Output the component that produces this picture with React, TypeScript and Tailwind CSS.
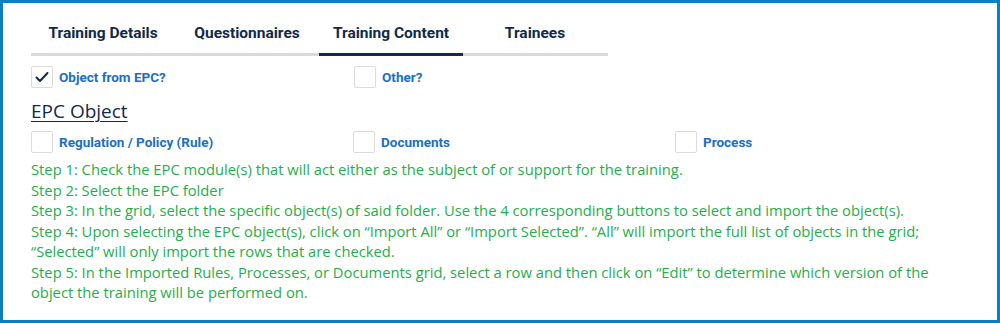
import React from "react";

const tabs = ["Training Details", "Questionnaires", "Training Content", "Trainees"];

function Box({ checked }: { checked?: boolean }) {
  return (
    <span className="flex h-[22px] w-[22px] shrink-0 items-center justify-center rounded-[2px] border border-[#dcdcdc] bg-white">
      {checked && (
        <svg width="16" height="16" viewBox="0 0 16 16" fill="none">
          <path d="M2.5 8.5 L6 12 L13.5 4" stroke="#0f2a4a" strokeWidth="2" strokeLinecap="round" strokeLinejoin="round" />
        </svg>
      )}
    </span>
  );
}

function Check({ label, checked }: { label: string; checked?: boolean }) {
  return (
    <div className="flex w-[323px] items-center gap-[6px]">
      <Box checked={checked} />
      <span className="text-[13.5px] font-bold text-[#1a6fc4]" style={{ fontFamily: "Roboto, sans-serif" }}>
        {label}
      </span>
    </div>
  );
}

export default function App() {
  return (
    <div className="h-[323px] w-[1000px] border-[3px] border-[#0b7fc4] bg-white">
      <div className="pl-[28px] pt-[17px]">
        <div className="flex w-[577px] border-b-[3px] border-[#d9d9d9]" style={{ fontFamily: "Roboto, sans-serif" }}>
          {tabs.map((t, i) => (
            <div
              key={t}
              className={`-mb-[3px] flex h-[36px] w-[144px] items-start justify-center pt-[2px] text-[15.5px] font-bold text-[#0f2a4a] ${
                i === 2 ? "border-b-[3px] border-[#0f2a4a]" : ""
              }`}
            >
              {t}
            </div>
          ))}
        </div>
        <div className="mt-[10px] flex">
          <Check label="Object from EPC?" checked />
          <Check label="Other?" />
        </div>
        <div
          className="mt-[10px] text-[19px] leading-[26px] text-[#0f2a4a] underline decoration-1 underline-offset-[3px]"
          style={{ fontFamily: "'Open Sans', sans-serif" }}
        >
          EPC Object
        </div>
        <div className="mt-[7px] flex">
          <Check label="Regulation / Policy (Rule)" />
          <Check label="Documents" />
          <Check label="Process" />
        </div>
        <div
          className="mt-[6px] w-[935px] text-[14.75px] leading-[20.5px] text-[#1fae4c]"
          style={{ fontFamily: "'Open Sans', sans-serif" }}
        >
          <div>Step 1: Check the EPC module(s) that will act either as the subject of or support for the training.</div>
          <div>Step 2: Select the EPC folder</div>
          <div>
            Step 3: In the grid, select the specific object(s) of said folder. Use the 4 corresponding buttons to select and import the object(s).
          </div>
          <div>
            Step 4: Upon selecting the EPC object(s), click on “Import All” or “Import Selected”. “All” will import the full list of objects in the grid; “Selected” will only import the rows that are checked.
          </div>
          <div>
            Step 5: In the Imported Rules, Processes, or Documents grid, select a row and then click on “Edit” to determine which version of the object the training will be performed on.
          </div>
        </div>
      </div>
    </div>
  );
}
